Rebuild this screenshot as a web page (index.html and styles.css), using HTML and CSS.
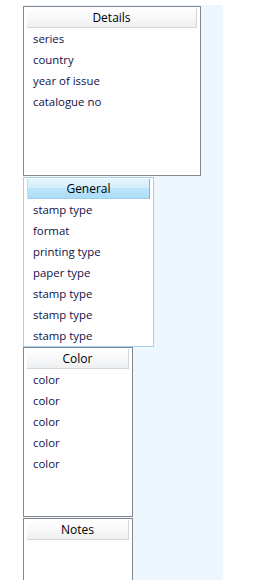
FILE: index.html
```html
<!DOCTYPE html>
<html>
<head>
<meta charset="utf-8">
<link rel="stylesheet" href="styles.css">
</head>
<body>
<div class="panel">
  <div class="box box-details">
    <div class="hdr">Details</div>
    <div class="item">series</div>
    <div class="item">country</div>
    <div class="item">year of issue</div>
    <div class="item">catalogue no</div>
  </div>
  <div class="box box-general">
    <div class="hdr hdr-active">General</div>
    <div class="item">stamp type</div>
    <div class="item">format</div>
    <div class="item">printing type</div>
    <div class="item">paper type</div>
    <div class="item">stamp type</div>
    <div class="item">stamp type</div>
    <div class="item">stamp type</div>
  </div>
  <div class="box box-color">
    <div class="hdr">Color</div>
    <div class="item">color</div>
    <div class="item">color</div>
    <div class="item">color</div>
    <div class="item">color</div>
    <div class="item">color</div>
  </div>
  <div class="box box-notes">
    <div class="hdr">Notes</div>
  </div>
</div>
</body>
</html>
```

FILE: styles.css
```css
html, body {
  margin: 0;
  padding: 0;
  background: #ffffff;
  overflow: hidden;
  height: 580px;
}
body {
  font-family: "Open Sans", "Noto Sans", sans-serif;
  font-size: 11.4px;
}
.panel {
  margin: 5px 0 0 23px;
  width: 200px;
  height: 575px;
  overflow: hidden;
  background: #eef6fe;
  padding-top: 1px;
  box-sizing: border-box;
  display: flex;
  flex-direction: column;
  align-items: flex-start;
}
.box {
  background: #ffffff;
  border: 1px solid #828790;
  box-sizing: border-box;
  height: 170px;
  flex: none;
  padding: 1px 3px 0 3px;
}
.box-details { width: 178px; margin-bottom: 1px; }
.box-general { width: 131px; border-color: #a9d0ea; margin-bottom: 0; }
.box-color { width: 110px; margin-bottom: 1px; }
.box-notes { width: 110px; }
.hdr {
  height: 20px;
  line-height: 19px;
  box-sizing: border-box;
  text-align: center;
  color: #000;
  background: linear-gradient(#ffffff 0%, #f7f8f9 50%, #eeeff1 100%);
  border-right: 1px solid #d5d5d5;
  border-bottom: 1px solid #d5d5d5;
  font-size: 12px;
}
.hdr-active {
  background: linear-gradient(#e3f4fd 0%, #d4eefc 45%, #bce5fc 50%, #abdcf7 100%);
  border-right: 1px solid #79b7de;
  border-bottom: 1px solid #9fd0ee;
  border-left: 1px solid #bfe0f3;
}
.item {
  height: 21px;
  line-height: 21px;
  padding-left: 6px;
  color: #101048;
  white-space: nowrap;
}
```
